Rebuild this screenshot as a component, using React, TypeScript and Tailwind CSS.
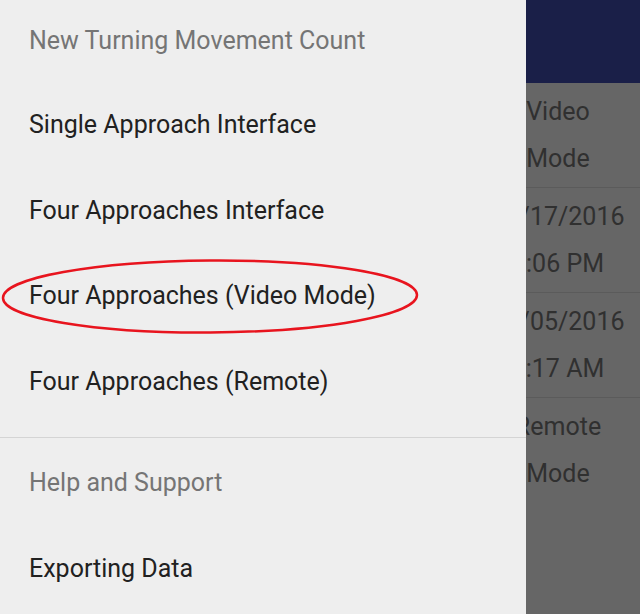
import React from "react";

type Entry = { label: string; kind: "header" | "item" };

const countEntries: Entry[] = [
  { label: "New Turning Movement Count", kind: "header" },
  { label: "Single Approach Interface", kind: "item" },
  { label: "Four Approaches Interface", kind: "item" },
  { label: "Four Approaches (Video Mode)", kind: "item" },
  { label: "Four Approaches (Remote)", kind: "item" },
];

const sessions = [
  ["Video", "Mode"],
  ["06/17/2016", "1:06 PM"],
  ["07/05/2016", "9:17 AM"],
  ["Remote", "Mode"],
];

const DrawerRow = ({ entry, height }: { entry: Entry; height: string }) => (
  <div className={`flex items-center pl-[29px] ${height}`}>
    <span
      className={
        entry.kind === "header"
          ? "text-[25px] leading-none text-[#757575]"
          : "text-[25px] leading-none text-[#212121]"
      }
    >
      {entry.label}
    </span>
  </div>
);

export default function App() {
  return (
    <div className="relative h-[614px] w-[640px] overflow-hidden bg-[#666666] font-['Roboto',sans-serif]">
      {/* underlying screen, dimmed by the open drawer */}
      <div className="h-[83px] bg-[#1a1f48]" />
      <div className="flex flex-col">
        {sessions.map((lines, i) => (
          <div
            key={i}
            className="flex h-[105px] justify-end border-b border-[#5b5b5b] last:border-b-0"
          >
            <div className="flex w-[164px] flex-col items-center pt-[5px] text-[25px] leading-[47px] text-[#303030]">
              {lines.map((l) => (
                <span key={l} className="whitespace-nowrap">
                  {l}
                </span>
              ))}
            </div>
          </div>
        ))}
      </div>

      {/* navigation drawer */}
      <nav className="absolute inset-y-0 left-0 flex w-[526px] flex-col bg-[#eeeeee]">
        {countEntries.map((e, i) => (
          <DrawerRow key={e.label} entry={e} height={i === 0 ? "h-[80px] mb-[2px]" : "h-[85.5px]"} />
        ))}
        <div className="mt-[13px] h-px bg-[#d4d4d4]" />
        <DrawerRow entry={{ label: "Help and Support", kind: "header" }} height="h-[89px]" />
        <DrawerRow entry={{ label: "Exporting Data", kind: "item" }} height="h-[82px]" />
      </nav>

      {/* red marker ring around the video mode entry */}
      <svg className="pointer-events-none absolute left-0 top-0" width="640" height="614">
        <ellipse
          cx="210"
          cy="296.5"
          rx="207"
          ry="36"
          fill="none"
          stroke="#e8141e"
          strokeWidth="2.5"
          transform="rotate(-0.4 210 296.5)"
        />
      </svg>
    </div>
  );
}
